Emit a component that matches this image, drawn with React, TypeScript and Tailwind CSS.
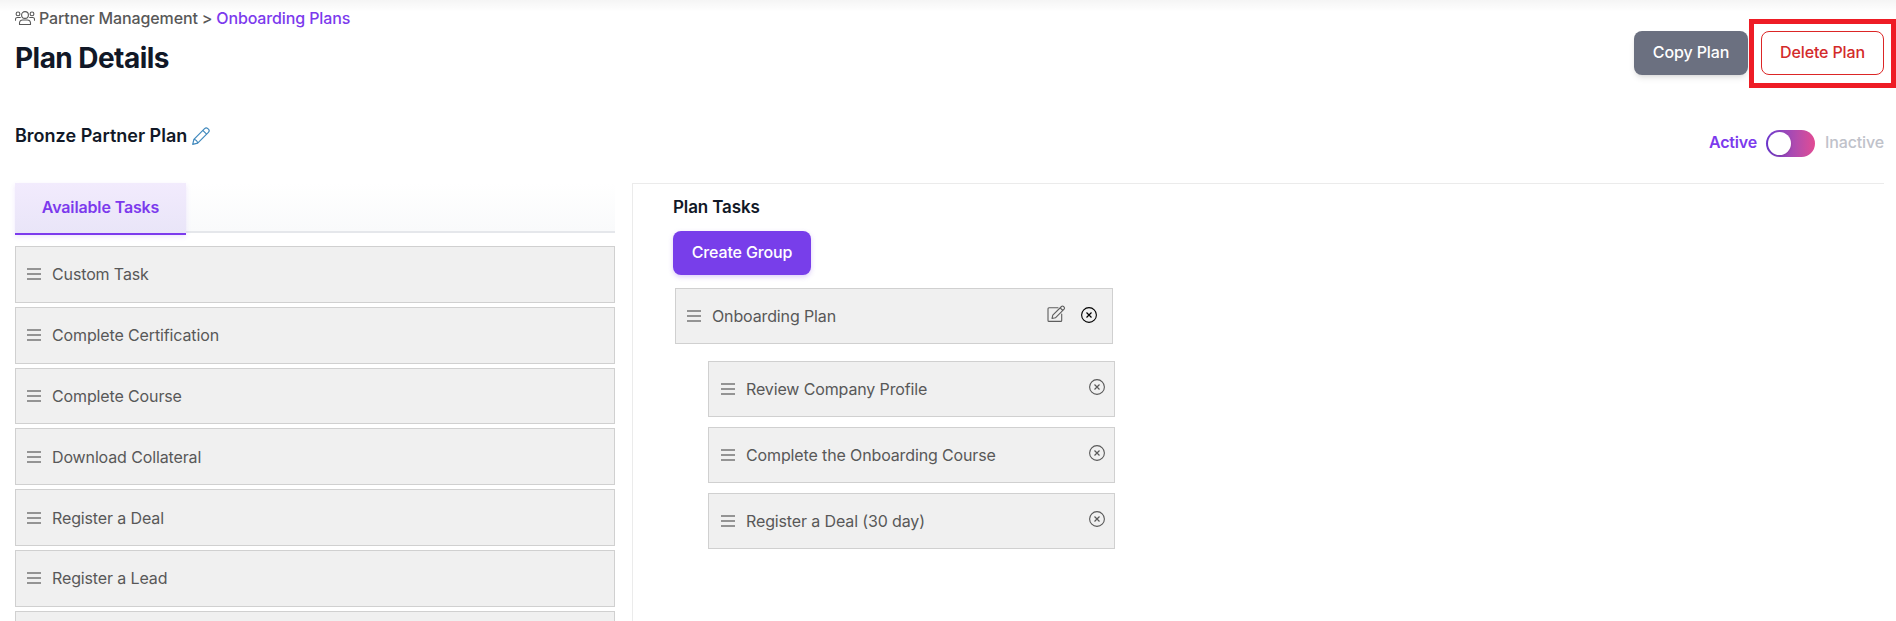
import React from 'react';

const AVAILABLE = [
  'Custom Task',
  'Complete Certification',
  'Complete Course',
  'Download Collateral',
  'Register a Deal',
  'Register a Lead',
];

const PLAN = ['Review Company Profile', 'Complete the Onboarding Course', 'Register a Deal (30 day)'];

function UsersIcon() {
  return (
    <svg className="h-4 w-5 shrink-0" viewBox="0 0 20 16" fill="none" stroke="currentColor" strokeWidth="1.1">
      <circle cx="10" cy="5" r="3.4" />
      <circle cx="3" cy="3.900" r="1.900" />
      <circle cx="17" cy="3.900" r="1.900" />
      <path d="M4.500 14.500v-1.200c0-2 1.400-3.300 3.200-3.300h4.600c1.800 0 3.200 1.300 3.200 3.300v1.200z" strokeLinejoin="round" />
      <path d="M.5 10.200v-.9c0-1 .8-1.800 1.800-1.800h3M19.500 10.200v-.9c0-1-.8-1.800-1.800-1.800h-3" strokeLinecap="round" />
    </svg>
  );
}

function PencilIcon() {
  return (
    <svg className="h-[18px] w-[18px] shrink-0 text-[#4189bd]" viewBox="0 0 18 18" fill="none" stroke="currentColor" strokeWidth="1.2" strokeLinejoin="round">
      <path d="M.7 17.300l1.200-5L12.600 1.600c1-1 2.200-1 3.200 0l.6.6c1 1 1 2.200 0 3.200L5.700 16.100z" />
      <path d="M10.800 3.400l3.800 3.800M1.900 12.300c1.800.1 3.700 2 3.800 3.800" />
    </svg>
  );
}

function EditIcon() {
  return (
    <svg className="h-[18px] w-[19px] text-[#5e5e5e]" viewBox="0 0 19 18" fill="none" stroke="currentColor" strokeWidth="1.1" strokeLinejoin="round" strokeLinecap="round">
      <path d="M11 2.700H2c-.6 0-1 .4-1 1v11.700c0 .6.4 1 1 1h11.700c.6 0 1-.4 1-1V9" />
      <path d="M5 13.500l.8-3.300 8.700-8.700c.6-.6 1.400-.6 2 0l.6.6c.6.6.6 1.400 0 2l-8.700 8.700zM13.200 2.900l2.600 2.600" />
    </svg>
  );
}

function CloseIcon() {
  return (
    <svg className="h-4 w-4" viewBox="0 0 16 16" fill="none" stroke="currentColor">
      <circle cx="8" cy="8" r="7.400" strokeWidth="1.100" />
      <path d="M5.500 5.500l5 5M10.500 5.500l-5 5" strokeWidth="1.200" />
    </svg>
  );
}

function Grip() {
  return (
    <span className="flex h-3 w-3.5 shrink-0 flex-col justify-between">
      <span className="h-0.5 bg-[#949494]" />
      <span className="h-0.5 bg-[#949494]" />
      <span className="h-0.5 bg-[#949494]" />
    </span>
  );
}

export default function App() {
  return (
    <div className="relative h-[621px] overflow-hidden bg-white font-['Inter',sans-serif] text-base tracking-[-0.13px] text-[#585858]">
      <div className="absolute inset-x-0 top-0 h-3 bg-linear-to-b from-black/4 to-transparent" />
      <header className="flex h-[103px] justify-between pr-3 pl-[15px]">
        <div className="pt-1.5">
          <nav className="flex h-6 items-center text-base">
            <UsersIcon />
            <span className="ml-1 font-medium">Partner Management</span>
            <span className="mx-1 font-medium">&gt;</span>
            <a className="font-medium text-[#7c3aed]">Onboarding Plans</a>
          </nav>
          <h1 className="mt-2 text-[28px] leading-10 font-bold tracking-[-0.55px] text-[#111827]">Plan Details</h1>
        </div>
        <div className="flex pt-[31px]">
          <button className="h-11 w-[114px] rounded-lg bg-[#6b7080] pb-0.5 font-medium text-white shadow-md">Copy Plan</button>
          <button className="ml-[13px] h-11 w-[123px] rounded-lg border border-[#dc2626] pb-0.5 font-medium text-[#d32a2a]">Delete Plan</button>
        </div>
      </header>
      <div className="absolute top-[19px] left-[1749px] h-[69px] w-[147px] border-5 border-[#ee1c25]" />

      <section className="flex h-20 justify-between pr-3 pl-[15px]">
        <div className="flex h-[66px] items-center gap-[5px]">
          <h2 className="text-lg font-semibold tracking-normal text-[#111827]">Bronze Partner Plan</h2>
          <PencilIcon />
        </div>
        <div className="flex h-20 items-center">
          <span className="pb-0.5 font-semibold tracking-[-0.2px] text-[#7c3aed]">Active</span>
          <span className="mr-2.5 ml-[9px] flex h-[27px] w-[49px] items-center rounded-full bg-linear-to-r from-[#6d35d0] to-[#e24a93] pl-0.5">
            <span className="h-[23px] w-[23px] rounded-full bg-white shadow-sm" />
          </span>
          <span className="pb-0.5 font-medium tracking-[-0.13px] text-[#bfc2ca]">Inactive</span>
        </div>
      </section>

      <main className="flex h-[438px] pr-3 pl-[15px]">
        <div className="w-[600px] shrink-0">
          <div className="flex h-[50px] border-b-2 border-[#e5e7eb] bg-linear-to-b from-white to-[#f9fafb]">
            <div className="h-[52px] w-[171px] shrink-0 border-b-2 border-[#7c3aed] bg-linear-to-b from-[#f2ebfd] to-[#e9e5f8] pt-3 text-center font-semibold text-[#7c3aed] shadow-[0_2px_5px_rgba(124,58,237,0.12)]">
              Available Tasks
            </div>
          </div>
          <div className="mt-[13px] flex flex-col gap-1">
            {AVAILABLE.map((t) => (
              <div key={t} className="flex h-[56.8px] shrink-0 items-center gap-[11px] border border-[#d0d0d0] bg-[#f0f0f0] pl-[11px]">
                <Grip />
                <span>{t}</span>
              </div>
            ))}
            <div className="h-[56.8px] shrink-0 border border-[#d0d0d0] bg-[#f0f0f0]" />
          </div>
        </div>
        <div className="ml-[17px] flex-1 border-t border-l border-[#ebebeb] pl-10">
          <h3 className="mt-[11px] h-6 text-[17px] leading-6 font-semibold text-[#111827]">Plan Tasks</h3>
          <button className="mt-3 block h-11 w-[138px] rounded-lg bg-[#783eea] pb-0.5 font-medium text-white shadow-[0_2px_5px_rgba(124,58,237,0.25)]">Create Group</button>
          <div className="mt-[13px] ml-0.5 flex h-14 w-[438px] items-center border border-[#d0d0d0] bg-[#f0f0f0] pr-[15px] pl-[11px]">
            <Grip />
            <span className="ml-[11px] flex-1">Onboarding Plan</span>
            <span className="mr-[15px] mb-1"><EditIcon /></span>
            <span className="mb-0.5 text-black"><CloseIcon /></span>
          </div>
          <div className="mt-[17px] ml-[35px] flex w-[407px] flex-col gap-2.5">
            {PLAN.map((t) => (
              <div key={t} className="flex h-14 items-center border border-[#d0d0d0] bg-[#f0f0f0] pr-[9px] pl-3">
                <Grip />
                <span className="ml-[11px] flex-1">{t}</span>
                <span className="mb-1"><CloseIcon /></span>
              </div>
            ))}
          </div>
        </div>
      </main>
    </div>
  );
}
